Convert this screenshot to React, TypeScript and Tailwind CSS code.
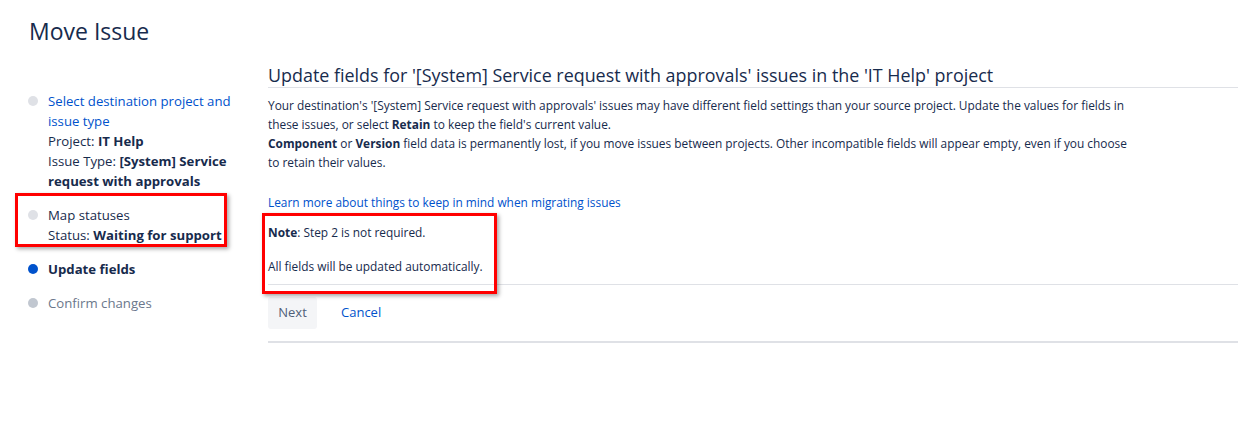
import React from "react";

function Dot({ color }: { color: string }) {
  return (
    <span className="flex h-[20px] w-[20px] shrink-0 items-center">
      <span className={`block h-[10px] w-[10px] rounded-full ${color}`} />
    </span>
  );
}

export default function App() {
  return (
    <div className="relative h-[447px] w-[1238px] overflow-hidden bg-white font-['Open_Sans',sans-serif] text-[#172b4d]">
      <h1 className="pl-[29px] pt-[16px] text-[23px] font-medium leading-[30px] text-[#172b4d]">Move Issue</h1>
      <div className="mt-[18px] flex">
        <aside className="w-[268px] shrink-0 pl-[28px] pt-[27px] text-[13.2px] leading-[20px]">
          <ol className="flex flex-col gap-[14px]">
            <li className="flex">
              <Dot color="bg-[#dfe1e6]" />
              <div className="whitespace-nowrap">
                <a className="text-[#0052cc]">
                  Select destination project and
                  <br />
                  issue type
                </a>
                <div>
                  Project: <b className="font-bold">IT Help</b>
                </div>
                <div>
                  Issue Type: <b className="font-bold">[System] Service</b>
                  <br />
                  <b className="font-bold">request with approvals</b>
                </div>
              </div>
            </li>
            <li className="flex">
              <Dot color="bg-[#dfe1e6]" />
              <div className="whitespace-nowrap">
                <div>Map statuses</div>
                <div>
                  Status: <b className="font-bold">Waiting for support</b>
                </div>
              </div>
            </li>
            <li className="flex">
              <Dot color="bg-[#0052cc]" />
              <div className="whitespace-nowrap font-bold">Update fields</div>
            </li>
            <li className="flex">
              <Dot color="bg-[#c1c7d0]" />
              <div className="whitespace-nowrap text-[#6b778c]">Confirm changes</div>
            </li>
          </ol>
        </aside>
        <main className="flex-1">
          <h2 className="border-b border-[#dfe1e6] text-[17.9px] font-medium leading-[23px] text-[#172b4d]">
            Update fields for '[System] Service request with approvals' issues in the 'IT Help' project
          </h2>
          <div className="mt-[8px] w-[900px] text-[11.88px] leading-[19px]">
            <p>
              Your destination's '[System] Service request with approvals' issues may have different field settings than your source project. Update the values for fields in
              <br />
              these issues, or select <b className="font-bold">Retain</b> to keep the field's current value.
              <br />
              <b className="font-bold">Component</b> or <b className="font-bold">Version</b> field data is permanently lost, if you move issues between projects. Other incompatible fields will appear empty, even if you choose
              <br />
              to retain their values.
            </p>
            <p className="mt-[21px]">
              <a className="text-[#0052cc]">Learn more about things to keep in mind when migrating issues</a>
            </p>
            <p className="mt-[11px]">
              <b className="font-bold">Note</b>: Step 2 is not required.
            </p>
            <p className="mt-[15px]">All fields will be updated automatically.</p>
          </div>
          <div className="mt-[8px] border-t border-[#dfe1e6] pt-[12px]">
            <div className="flex items-center gap-[8px] text-[13px]">
              <button className="h-[32px] w-[49px] rounded-[3px] bg-[#f4f5f7] text-[#505f79]">Next</button>
              <button className="h-[32px] px-[16px] text-[#0052cc]">Cancel</button>
            </div>
          </div>
          <div className="mt-[12px] h-[2px] bg-[#dfe1e6]" />
        </main>
      </div>

      <div className="pointer-events-none absolute left-[15px] top-[193px] h-[54px] w-[212px] border-[3px] border-[#ff0000] shadow-[2px_2px_4px_rgba(0,0,0,0.35)]" />
      <div className="pointer-events-none absolute left-[262px] top-[213px] h-[81px] w-[235px] border-[3px] border-[#ff0000] shadow-[2px_2px_4px_rgba(0,0,0,0.35)]" />
    </div>
  );
}
